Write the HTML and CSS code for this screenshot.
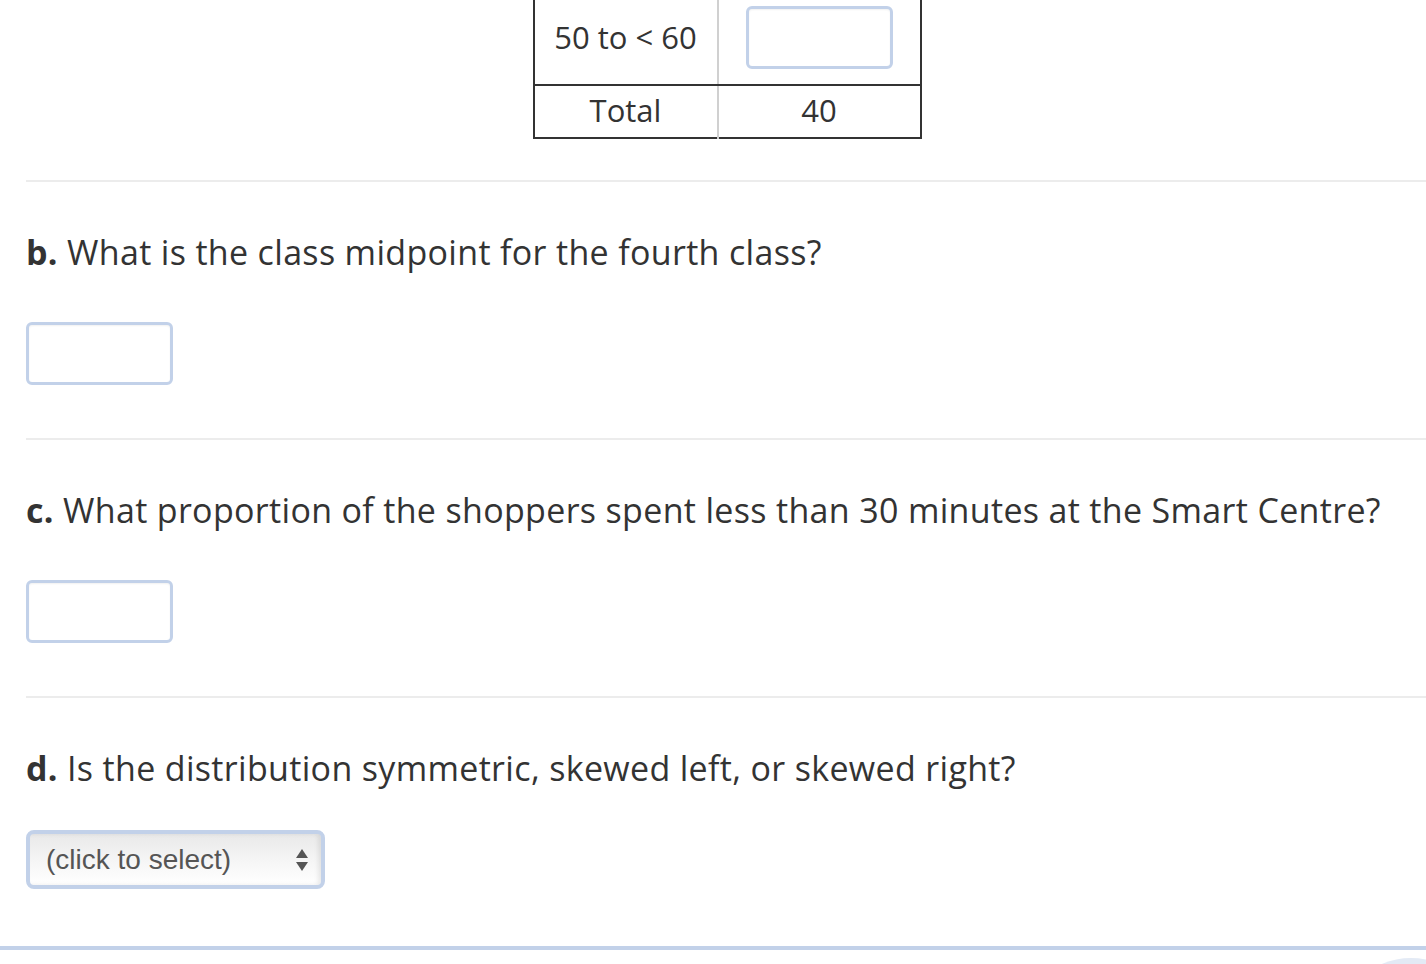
FILE: index.html
```html
<!DOCTYPE html>
<html lang="en">
<head>
    <meta charset="UTF-8">
    <title>Frequency Distribution Question</title>
    <link rel="stylesheet" href="styles.css">
</head>
<body>
    <div class="page">
        <div class="table-wrap">
            <table class="freq-table">
                <tr class="row-input">
                    <td>50 to &lt; 60</td>
                    <td><input type="text" class="answer-box small"></td>
                </tr>
                <tr class="row-total">
                    <td>Total</td>
                    <td>40</td>
                </tr>
            </table>
        </div>

        <div class="question">
            <p class="prompt"><b>b.</b> What is the class midpoint for the fourth class?</p>
            <input type="text" class="answer-box">
        </div>

        <div class="question">
            <p class="prompt"><b>c.</b> What proportion of the shoppers spent less than 30 minutes at the Smart Centre?</p>
            <input type="text" class="answer-box">
        </div>

        <div class="question last">
            <p class="prompt"><b>d.</b> Is the distribution symmetric, skewed left, or skewed right?</p>
            <div class="select-box">
                <span>(click to select)</span>
                <svg class="select-arrows" width="14" height="24" viewBox="0 0 14 24">
                    <polygon points="7,1 13,10 1,10" fill="#555"></polygon>
                    <polygon points="1,14 13,14 7,23" fill="#555"></polygon>
                </svg>
            </div>
        </div>
    </div>

    <div class="footer">
        <div class="footer-bubble"></div>
    </div>
</body>
</html>
```

FILE: styles.css
```css
* {
    margin: 0;
    padding: 0;
    box-sizing: border-box;
}

html, body {
    width: 100%;
    height: 100%;
    overflow: hidden;
    background-color: #fff;
    font-family: 'Open Sans', 'Noto Sans', sans-serif;
    color: #333;
}

.page {
    padding-left: 26px;
}

.table-wrap {
    display: flex;
    justify-content: center;
    margin-top: -10px;
    margin-bottom: 41px;
    padding-left: 2px;
}

.freq-table {
    border-collapse: collapse;
    border: 2px solid #333;
    border-top: none;
    font-size: 31px;
}

.freq-table td {
    text-align: center;
    padding: 0;
}

.freq-table td:first-child {
    width: 184px;
    border-right: 2px solid #d0d0d0;
}

.freq-table td:last-child {
    width: 203px;
}

.row-input td {
    height: 95px;
    border-bottom: 2px solid #333;
}

.row-total td {
    height: 53px;
    padding-bottom: 3px;
}

.question {
    border-top: 2px solid #ececec;
    padding: 47px 0 53px;
}

.question.last {
    padding-bottom: 57px;
}

.prompt {
    font-size: 34px;
    line-height: 46px;
    letter-spacing: 0.33px;
    margin-bottom: 47px;
}

.question.last .prompt {
    margin-bottom: 39px;
}

.prompt b {
    font-weight: 700;
}

.answer-box {
    display: block;
    width: 147px;
    height: 63px;
    border: 3px solid #c2d1e9;
    border-radius: 6px;
    background: #fff;
    box-shadow: inset 0 1px 2px rgba(0, 0, 0, 0.06);
    outline: none;
}

.answer-box.small {
    margin: 0 auto;
}

.select-box {
    width: 299px;
    height: 59px;
    border: 4px solid #c2d1e9;
    border-radius: 8px;
    background: linear-gradient(#e9e9e9, #f7f7f7 60%, #fff);
    box-shadow: inset -3px 0 4px rgba(0, 0, 0, 0.08);
    display: flex;
    align-items: center;
    justify-content: space-between;
    padding: 0 12px 0 16px;
    font-family: 'Liberation Sans', Arial, sans-serif;
    font-size: 28px;
    color: #555;
}

.select-arrows {
    display: block;
}

.footer {
    position: relative;
    height: 20px;
    border-top: 4px solid #c2d1e9;
}

.footer-bubble {
    position: absolute;
    right: -60px;
    top: 8px;
    width: 150px;
    height: 150px;
    border-radius: 50%;
    background: #e3eaf5;
}
```
